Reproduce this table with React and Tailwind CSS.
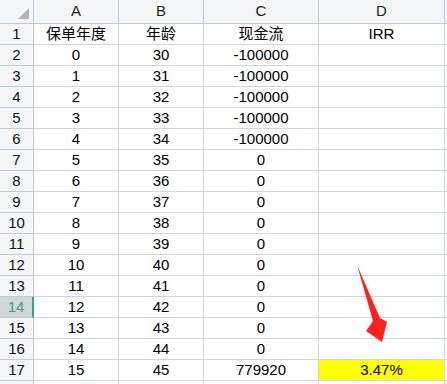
const rows = [
  ['保单年度', '年龄', '现金流', 'IRR'],
  ['0', '30', '-100000', ''],
  ['1', '31', '-100000', ''],
  ['2', '32', '-100000', ''],
  ['3', '33', '-100000', ''],
  ['4', '34', '-100000', ''],
  ['5', '35', '0', ''],
  ['6', '36', '0', ''],
  ['7', '37', '0', ''],
  ['8', '38', '0', ''],
  ['9', '39', '0', ''],
  ['10', '40', '0', ''],
  ['11', '41', '0', ''],
  ['12', '42', '0', ''],
  ['13', '43', '0', ''],
  ['14', '44', '0', ''],
  ['15', '45', '779920', '3.47%'],
];

const cols = ['A', 'B', 'C', 'D'];

const App = () => {
  return (
    <div
      className="relative w-[447px] h-[384px] overflow-hidden bg-white text-[15px] text-black"
      style={{ fontFamily: '"Liberation Sans", "Noto Sans CJK SC", sans-serif' }}
    >
      <div className="grid grid-cols-[34px_85px_85px_115px_126px_2px]">
        {/* Column headers */}
        <div className="relative h-[24px] bg-[#f5f6f8] border-r border-b border-[#c3c8d6]">
          <svg className="absolute left-[18px] top-[8px]" width="12" height="12" viewBox="0 0 12 12">
            <polygon points="11,0 11,11 0,11" fill="#b4b4b4" />
          </svg>
        </div>
        {cols.map((c) => (
          <div
            key={c}
            className="h-[24px] bg-[#f5f6f8] border-r border-b border-[#c3c8d6] flex items-center justify-center text-[#222]"
          >
            {c}
          </div>
        ))}
        <div className="h-[24px] bg-[#f5f6f8] border-b border-[#c3c8d6]" />

        {/* Data rows */}
        {rows.map((r, i) => {
          const n = i + 1;
          const active = n === 14;
          return [
            <div
              key={`h${n}`}
              className={`h-[21px] border-b border-[#c3c8d6] flex items-center justify-center ${
                active
                  ? 'bg-[#d3d6db] text-[#2aa876] border-r-2 border-r-[#21b17a]'
                  : 'bg-[#f5f6f8] text-[#111] border-r'
              }`}
            >
              {n}
            </div>,
            ...r.map((v, j) => (
              <div
                key={`c${n}-${j}`}
                className={`h-[21px] border-r border-b border-[#d0d4df] flex items-center justify-center ${
                  n === 17 && j === 3 ? 'bg-[#ffff00]' : ''
                }`}
              >
                {v}
              </div>
            )),
            <div key={`e${n}`} className="h-[21px] border-b border-[#d0d4df]" />,
          ];
        })}

        {/* Partial row 18 */}
        <div className="h-[3px] bg-[#f5f6f8] border-r border-[#c3c8d6]" />
        <div className="h-[3px] border-r border-[#d0d4df]" />
        <div className="h-[3px] border-r border-[#d0d4df]" />
        <div className="h-[3px] border-r border-[#d0d4df]" />
        <div className="h-[3px] border-r border-[#d0d4df]" />
        <div className="h-[3px]" />
      </div>

      {/* Red arrow annotation */}
      <svg className="absolute left-0 top-0" width="447" height="384" viewBox="0 0 447 384">
        <polygon points="357,265 380,318 387,322 382,342 366,331 373,321" fill="#ff1f1f" />
      </svg>
    </div>
  );
};

export default App;
